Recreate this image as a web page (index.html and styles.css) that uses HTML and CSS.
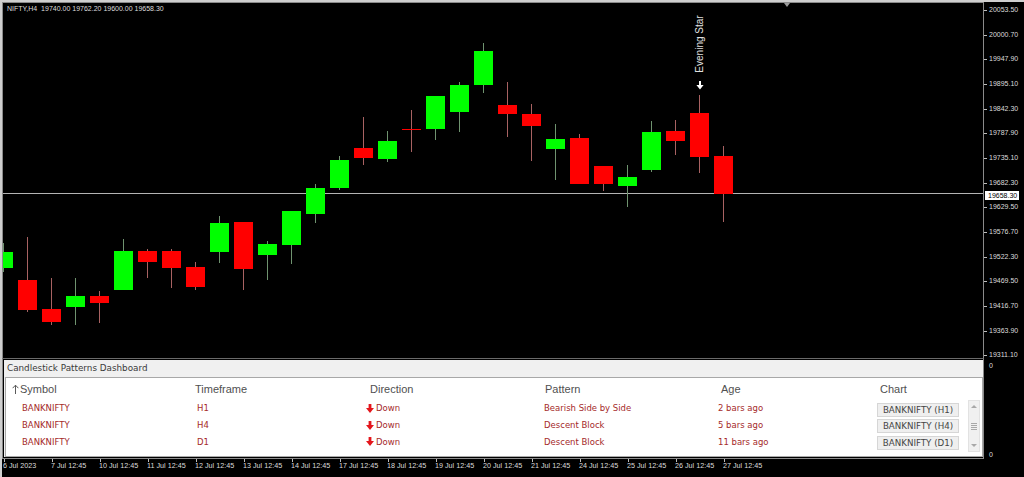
FILE: index.html
```html
<!DOCTYPE html>
<html>
<head>
<meta charset="utf-8">
<link rel="stylesheet" href="styles.css">
</head>
<body>
<div class="window">
  <div class="plot">
    <svg class="chart" viewBox="3 3 980 355" width="980" height="355">
      <rect class="pline" x="3" y="193" width="980" height="1"/>
      <g class="wick-g">
        <rect x="3" y="243" width="1" height="29"/>
        <rect x="75" y="278" width="1" height="47"/>
        <rect x="123" y="239" width="1" height="51"/>
        <rect x="219" y="216" width="1" height="47"/>
        <rect x="267" y="241" width="1" height="39"/>
        <rect x="291" y="211" width="1" height="53"/>
        <rect x="315" y="184" width="1" height="39"/>
        <rect x="339" y="156" width="1" height="34"/>
        <rect x="387" y="131" width="1" height="31"/>
        <rect x="435" y="96" width="1" height="44"/>
        <rect x="459" y="82" width="1" height="50"/>
        <rect x="483" y="43" width="1" height="50"/>
        <rect x="555" y="124" width="1" height="56"/>
        <rect x="627" y="165" width="1" height="42"/>
        <rect x="651" y="121" width="1" height="51"/>
      </g>
      <g class="wick-r">
        <rect x="27" y="237" width="1" height="75"/>
        <rect x="51" y="278" width="1" height="47"/>
        <rect x="99" y="291" width="1" height="32"/>
        <rect x="147" y="249" width="1" height="29"/>
        <rect x="171" y="249" width="1" height="39"/>
        <rect x="195" y="262" width="1" height="28"/>
        <rect x="243" y="222" width="1" height="68"/>
        <rect x="363" y="117" width="1" height="48"/>
        <rect x="411" y="110" width="1" height="42"/>
        <rect x="507" y="82" width="1" height="55"/>
        <rect x="531" y="104" width="1" height="57"/>
        <rect x="579" y="134" width="1" height="50"/>
        <rect x="603" y="166" width="1" height="25"/>
        <rect x="675" y="120" width="1" height="35"/>
        <rect x="699" y="95" width="1" height="78"/>
        <rect x="723" y="146" width="1" height="76"/>
      </g>
      <g class="body-g">
        <rect x="-6" y="252" width="19" height="16"/>
        <rect x="66" y="296" width="19" height="11"/>
        <rect x="114" y="251" width="19" height="39"/>
        <rect x="210" y="223" width="19" height="29"/>
        <rect x="258" y="244" width="19" height="11"/>
        <rect x="282" y="211" width="19" height="34"/>
        <rect x="306" y="188" width="19" height="26"/>
        <rect x="330" y="160" width="19" height="28"/>
        <rect x="378" y="141" width="19" height="18"/>
        <rect x="426" y="96" width="19" height="33"/>
        <rect x="450" y="85" width="19" height="27"/>
        <rect x="474" y="51" width="19" height="34"/>
        <rect x="546" y="139" width="19" height="10"/>
        <rect x="618" y="177" width="19" height="9"/>
        <rect x="642" y="132" width="19" height="38"/>
      </g>
      <g class="body-r">
        <rect x="18" y="280" width="19" height="30"/>
        <rect x="42" y="309" width="19" height="13"/>
        <rect x="90" y="296" width="19" height="7"/>
        <rect x="138" y="251" width="19" height="11"/>
        <rect x="162" y="251" width="19" height="17"/>
        <rect x="186" y="267" width="19" height="20"/>
        <rect x="234" y="222" width="19" height="47"/>
        <rect x="354" y="148" width="19" height="10"/>
        <rect class="doji" x="402" y="129" width="19" height="1"/>
        <rect x="498" y="105" width="19" height="9"/>
        <rect x="522" y="114" width="19" height="12"/>
        <rect x="570" y="138" width="19" height="46"/>
        <rect x="594" y="166" width="19" height="18"/>
        <rect x="666" y="131" width="19" height="10"/>
        <rect x="690" y="113" width="19" height="44"/>
        <rect x="714" y="156" width="19" height="38"/>
      </g>
      <text class="pattern-name" transform="translate(703,44) rotate(-90)" text-anchor="middle">Evening Star</text>
      <path class="signal" d="M699 81h2v4h2.6l-3.6 4.6l-3.6-4.6h2.6z"/>
    </svg>
    <div class="symbol-info">NIFTY,H4  19740.00 19762.20 19600.00 19658.30</div>
    <div class="shift-mark"></div>
  </div>

  <div class="price-axis">
    <div class="pl">20053.50</div>
    <div class="pl">20000.70</div>
    <div class="pl">19947.90</div>
    <div class="pl">19895.10</div>
    <div class="pl">19842.30</div>
    <div class="pl">19787.90</div>
    <div class="pl">19735.10</div>
    <div class="pl">19682.30</div>
    <div class="pl">19629.50</div>
    <div class="pl">19576.70</div>
    <div class="pl">19522.30</div>
    <div class="pl">19469.50</div>
    <div class="pl">19416.70</div>
    <div class="pl">19363.90</div>
    <div class="pl">19311.10</div>
    <div class="price-tag">19658.30</div>
  </div>

  <div class="sub">
    <div class="dash">
      <div class="dash-title">Candlestick Patterns Dashboard</div>
      <div class="dash-panel">
        <div class="table">
          <div class="th th-sym"><svg class="sort" viewBox="0 0 7 10" width="7" height="10"><path d="M3.5 10V1.2M0.6 4.2L3.5 1.2L6.4 4.2"/></svg>Symbol</div>
          <div class="th th-tf">Timeframe</div>
          <div class="th th-dir">Direction</div>
          <div class="th th-pat">Pattern</div>
          <div class="th th-age">Age</div>
          <div class="th th-chart">Chart</div>

          <div class="td td-sym">BANKNIFTY</div>
          <div class="td td-tf">H1</div>
          <div class="td td-dir"><svg class="down" viewBox="0 0 8 9" width="8" height="9"><path d="M2.6 0h2.8v4h2.6L4 9L0 4h2.6z"/></svg>Down</div>
          <div class="td">Bearish Side by Side</div>
          <div class="td">2 bars ago</div>
          <div class="td td-chart"><div class="btn">BANKNIFTY (H1)</div></div>

          <div class="td td-sym">BANKNIFTY</div>
          <div class="td td-tf">H4</div>
          <div class="td td-dir"><svg class="down" viewBox="0 0 8 9" width="8" height="9"><path d="M2.6 0h2.8v4h2.6L4 9L0 4h2.6z"/></svg>Down</div>
          <div class="td">Descent Block</div>
          <div class="td">5 bars ago</div>
          <div class="td td-chart"><div class="btn">BANKNIFTY (H4)</div></div>

          <div class="td td-sym">BANKNIFTY</div>
          <div class="td td-tf">D1</div>
          <div class="td td-dir"><svg class="down" viewBox="0 0 8 9" width="8" height="9"><path d="M2.6 0h2.8v4h2.6L4 9L0 4h2.6z"/></svg>Down</div>
          <div class="td">Descent Block</div>
          <div class="td">11 bars ago</div>
          <div class="td td-chart"><div class="btn">BANKNIFTY (D1)</div></div>
        </div>
        <div class="scroll">
          <div class="sc-up"></div>
          <div class="sc-grip"><span></span><span></span><span></span><span></span></div>
          <div class="sc-down"></div>
        </div>
      </div>
    </div>
  </div>

  <div class="sub-axis"><div class="zl">0</div><div class="zl">0</div></div>

  <div class="time-axis">
    <div class="tl">6 Jul 2023</div>
    <div class="tl">7 Jul 12:45</div>
    <div class="tl">10 Jul 12:45</div>
    <div class="tl">11 Jul 12:45</div>
    <div class="tl">12 Jul 12:45</div>
    <div class="tl">13 Jul 12:45</div>
    <div class="tl">14 Jul 12:45</div>
    <div class="tl">17 Jul 12:45</div>
    <div class="tl">18 Jul 12:45</div>
    <div class="tl">19 Jul 12:45</div>
    <div class="tl">20 Jul 12:45</div>
    <div class="tl">21 Jul 12:45</div>
    <div class="tl">24 Jul 12:45</div>
    <div class="tl">25 Jul 12:45</div>
    <div class="tl">26 Jul 12:45</div>
    <div class="tl">27 Jul 12:45</div>
  </div>
  <div class="corner"></div>
</div>
</body>
</html>
```

FILE: styles.css
```css
html, body {
  margin: 0;
  padding: 0;
  background: #000;
  overflow: hidden;
}

.window {
  width: 1024px;
  height: 477px;
  box-sizing: border-box;
  border-top: 2px solid #cfcfcf;
  border-left: 2px solid #cfcfcf;
  background: #000;
  display: grid;
  grid-template-columns: 982px 40px;
  grid-template-rows: 356px 100px 19px;
  font-family: "Liberation Sans", Arial, sans-serif;
}

/* ---------- main plot ---------- */
.plot {
  position: relative;
  border-left: 1px solid #8a8a8a;
  border-top: 1px solid #8a8a8a;
  border-right: 1px solid #8a8a8a;
  overflow: hidden;
}

.chart {
  display: block;
}

.pline { fill: #b4b4b4; }
.wick-g rect { fill: #6f936f; }
.wick-r rect { fill: #a86262; }
.body-g rect { fill: #00ff00; }
.body-r rect { fill: #ff0000; }

.pattern-name {
  font-family: "Liberation Sans", Arial, sans-serif;
  font-size: 10px;
  fill: #e0e0e0;
}

.signal { fill: #ffffff; }

.symbol-info {
  position: absolute;
  left: 4px;
  top: 1px;
  font-size: 7px;
  line-height: 10px;
  color: #dcdcdc;
  white-space: pre;
}

.shift-mark {
  position: absolute;
  left: 781px;
  top: 0;
  width: 0;
  height: 0;
  border-left: 3px solid transparent;
  border-right: 3px solid transparent;
  border-top: 4px solid #9a9a9a;
}

/* ---------- price axis ---------- */
.price-axis {
  position: relative;
  display: flex;
  flex-direction: column;
  padding-top: 3px;
}

.pl {
  position: relative;
  height: 24.68px;
  flex: none;
  font-size: 7px;
  line-height: 10px;
  color: #dcdcdc;
  padding-left: 5px;
  white-space: nowrap;
}

.pl::before {
  content: "";
  position: absolute;
  left: 0;
  top: 5px;
  width: 3px;
  height: 1px;
  background: #bdbdbd;
}

.price-tag {
  position: absolute;
  left: 1px;
  top: 189px;
  width: 34px;
  height: 9px;
  box-sizing: border-box;
  padding-left: 3px;
  background: #ffffff;
  color: #000;
  font-size: 7px;
  line-height: 9px;
}

/* ---------- sub window + dashboard ---------- */
.sub {
  border-left: 1px solid #8a8a8a;
  border-right: 1px solid #8a8a8a;
  border-top: 1px solid #6a6a6a;
}

.dash {
  margin: 1px 0 0 1px;
  height: 97px;
  display: flex;
  flex-direction: column;
  background: #f0f0f0;
  font-family: "DejaVu Sans", Verdana, sans-serif;
}

.dash-title {
  height: 17px;
  line-height: 17px;
  padding-left: 3px;
  font-size: 8.8px;
  color: #3a3a3a;
  flex: none;
}

.dash-panel {
  flex: 1;
  margin-left: 1px;
  background: #ffffff;
  border: 1px solid #a8a8a8;
  display: flex;
}

.table {
  display: grid;
  grid-template-columns: 185px 171px 178px 174px 159px 83px;
  grid-template-rows: 22px repeat(3, 16.7px);
  align-items: center;
  padding-left: 4px;
}

.th {
  font-family: "Liberation Sans", Arial, sans-serif;
  font-size: 11px;
  color: #505050;
  white-space: nowrap;
  display: flex;
  align-items: center;
}

.th-sym { padding-left: 2px; }
.th-dir { padding-left: 4px; }
.th-pat { padding-left: 1px; }
.th-age { padding-left: 3px; }
.th-chart { padding-left: 3px; }

.sort {
  flex: none;
  margin-right: 1px;
}
.sort path {
  fill: none;
  stroke: #5a5a5a;
  stroke-width: 1;
}

.td {
  font-size: 8.5px;
  color: #a52a2a;
  white-space: nowrap;
  display: flex;
  align-items: center;
}

.td-sym { padding-left: 12px; }
.td-tf { padding-left: 2px; }

.down {
  flex: none;
  margin-right: 2px;
}
.down path { fill: #e4161c; }

.td-chart {
  align-self: end;
}

.btn {
  width: 82px;
  height: 14px;
  box-sizing: border-box;
  background: #efefef;
  border: 1px solid #d6d6d6;
  color: #454545;
  font-size: 8.7px;
  line-height: 12px;
  text-align: center;
}

.scroll {
  width: 12px;
  height: 52px;
  box-sizing: border-box;
  margin: 22px 2px 0 auto;
  background: #f0f0f0;
  border: 1px solid #e2e2e2;
  display: flex;
  flex-direction: column;
  align-items: center;
  justify-content: space-between;
  padding: 4px 0;
}

.sc-up {
  width: 0;
  height: 0;
  border-left: 3px solid transparent;
  border-right: 3px solid transparent;
  border-bottom: 3px solid #a8a8a8;
}

.sc-down {
  width: 0;
  height: 0;
  border-left: 3px solid transparent;
  border-right: 3px solid transparent;
  border-top: 3px solid #a8a8a8;
}

.sc-grip {
  display: flex;
  flex-direction: column;
  gap: 1px;
}
.sc-grip span {
  display: block;
  width: 6px;
  height: 1px;
  background: #a8a8a8;
}

/* ---------- sub axis ---------- */
.sub-axis {
  display: flex;
  flex-direction: column;
  gap: 79px;
  padding-top: 3px;
}

.zl {
  font-size: 7px;
  line-height: 10px;
  color: #dcdcdc;
  padding-left: 5px;
}

/* ---------- time axis ---------- */
.time-axis {
  border-top: 1px solid #8a8a8a;
  display: flex;
  padding-left: 1px;
  padding-top: 2px;
}

.tl {
  position: relative;
  width: 48px;
  flex: none;
  font-size: 7.2px;
  line-height: 10px;
  color: #dcdcdc;
  white-space: nowrap;
}

.tl::before {
  content: "";
  position: absolute;
  left: 1px;
  top: -2px;
  width: 1px;
  height: 3px;
  background: #bdbdbd;
}

.corner {
  background: #000;
}
```
